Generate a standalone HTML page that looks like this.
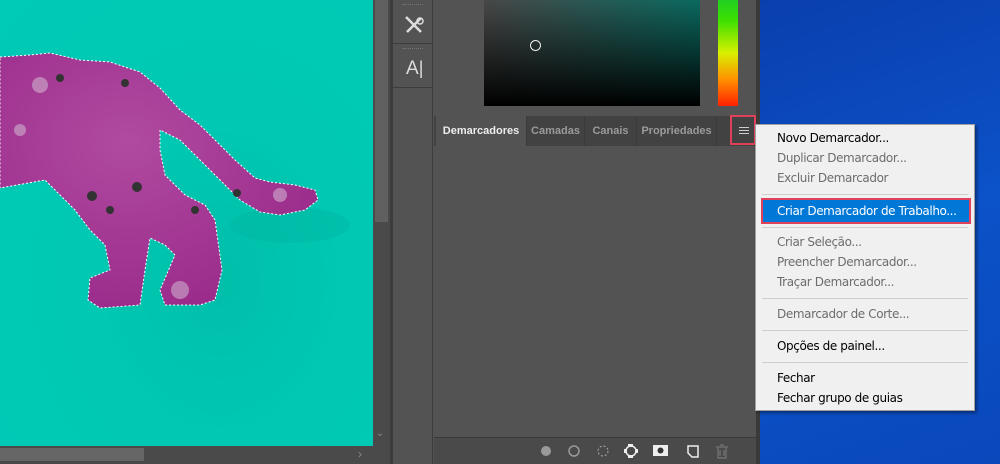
<!DOCTYPE html>
<html><head><meta charset="utf-8"><style>
*{margin:0;padding:0;box-sizing:border-box}
body{width:1000px;height:464px;overflow:hidden;position:relative;background:#535353;font-family:"Liberation Sans",sans-serif}
.a{position:absolute}
.menu div.i{position:absolute;left:21px;font-size:12px;font-family:"DejaVu Sans","Liberation Sans",sans-serif;letter-spacing:-0.4px}
.g{color:#6d6d6d}.k{color:#000}
.sep{position:absolute;left:6px;right:6px;height:1px;background:#cfcfcf}
.tab{position:absolute;top:0;height:30px;line-height:30px;font-size:11px;font-weight:bold;color:#9a9a9a;text-align:center;border-right:1px solid #3a3a3a;font-family:"Liberation Sans",sans-serif}
</style></head><body>
<div class="a" style="left:0;top:0;width:373px;height:446px;background:radial-gradient(ellipse at 220px 280px,#00bfaa 0,#00c8b2 40%,#00cbb6 100%)"></div>
<svg class="a" style="left:0;top:0" width="373" height="446">
<defs><radialGradient id="p" cx="0.4" cy="0.35" r="0.7"><stop offset="0" stop-color="#b04aa0"/><stop offset="1" stop-color="#9a2a8a"/></radialGradient></defs>
<ellipse cx="290" cy="225" rx="60" ry="18" fill="#00b5a0" opacity=".4"/>
<path d="M0,57 L30,55 L50,53 L80,60 L110,62 L140,72 L160,88 L180,110 L200,125 L215,140 L235,160 L255,178 L270,182 L295,185 L315,190 L318,200 L305,210 L280,215 L260,212 L240,200 L220,180 L200,160 L180,140 L160,130 L160,150 L165,175 L185,195 L205,205 L215,220 L222,270 L215,300 L200,305 L165,305 L160,290 L175,255 L165,245 L150,238 L145,270 L140,305 L100,308 L88,300 L90,278 L110,270 L105,245 L90,230 L75,210 L60,195 L45,180 L0,188 Z" fill="url(#p)" stroke="#fff" stroke-width="1" stroke-dasharray="2 2"/>
<g fill="#333"><circle cx="60" cy="78" r="4"/><circle cx="125" cy="83" r="4"/><circle cx="137" cy="187" r="5"/><circle cx="92" cy="196" r="5"/><circle cx="110" cy="210" r="4"/><circle cx="195" cy="210" r="4"/><circle cx="237" cy="193" r="4"/></g>
<g fill="#d8c8d8" opacity=".5"><circle cx="40" cy="85" r="8"/><circle cx="180" cy="290" r="9"/><circle cx="280" cy="195" r="7"/><circle cx="20" cy="130" r="6"/></g>
</svg>
<div class="a" style="left:373px;top:0;width:17px;height:446px;background:#4a4a4a"></div>
<div class="a" style="left:375px;top:0;width:13px;height:222px;background:#606060"></div>
<div class="a" style="left:376px;top:428px;color:#888;font-size:10px">&#8964;</div>
<div class="a" style="left:0;top:446px;width:390px;height:18px;background:#4a4a4a"></div>
<div class="a" style="left:0;top:448px;width:144px;height:13px;background:#666"></div>
<div class="a" style="left:358px;top:447px;color:#888;font-size:12px">&#8250;</div>
<div class="a" style="left:390px;top:0;width:3px;height:464px;background:#3c3c3c"></div>
<div class="a" style="left:393px;top:0;width:40px;height:464px;background:#535353;border-right:1px solid #3c3c3c"></div>
<div class="a" style="left:393px;top:43px;width:40px;height:1px;background:#3c3c3c"></div>
<div class="a" style="left:393px;top:87px;width:40px;height:1px;background:#3c3c3c"></div>
<div class="a" style="left:403px;top:4px;width:20px;height:3px;border-top:1px dotted #777"></div>
<div class="a" style="left:403px;top:48px;width:20px;height:3px;border-top:1px dotted #777"></div>
<svg class="a" style="left:403px;top:14px" width="22" height="22"><path d="M3,3 L18,18 M18,4 L4,18" stroke="#ddd" stroke-width="2.5"/><circle cx="17" cy="7" r="3" fill="none" stroke="#ddd" stroke-width="1.5"/></svg>
<div class="a" style="left:406px;top:58px;color:#ddd;font-size:19px">A<span style="font-size:18px">|</span></div>
<div class="a" style="left:434px;top:0;width:322px;height:116px;background:#535353"></div>
<div class="a" style="left:484px;top:0;width:216px;height:106px;background:linear-gradient(to bottom,transparent,#000),linear-gradient(to right,#484848,#0a6a60)"></div>
<div class="a" style="left:530px;top:40px;width:11px;height:11px;border:1px solid #eee;border-radius:50%"></div>
<div class="a" style="left:718px;top:0;width:20px;height:106px;background:linear-gradient(#20d020,#40e000 20%,#d8f000 50%,#ff9000 75%,#ff2000)"></div>
<div class="a" style="left:434px;top:116px;width:322px;height:30px;background:#424242">
<div class="tab" style="left:2px;width:91px;background:#535353;color:#eee">Demarcadores</div>
<div class="tab" style="left:93px;width:58px">Camadas</div>
<div class="tab" style="left:151px;width:52px">Canais</div>
<div class="tab" style="left:203px;width:80px">Propriedades</div>
</div>
<div class="a" style="left:730px;top:115px;width:26px;height:30px;border:2px solid #e0405a"></div>
<div class="a" style="left:739px;top:127px;width:10px;height:7px;border-top:1px solid #ccc;border-bottom:1px solid #ccc"><div style="margin-top:2px;height:1px;background:#ccc"></div></div>
<div class="a" style="left:434px;top:146px;width:322px;height:291px;background:#535353"></div>
<div class="a" style="left:434px;top:437px;width:322px;height:27px;background:#4a4a4a;border-top:1px solid #3a3a3a"></div>
<svg class="a" style="left:536px;top:442px" width="200" height="18">
<circle cx="10" cy="9" r="5" fill="#999"/>
<circle cx="38" cy="9" r="5" fill="none" stroke="#999" stroke-width="1.5"/>
<circle cx="67" cy="9" r="5" fill="none" stroke="#aaa" stroke-dasharray="2 2"/>
<circle cx="95" cy="9" r="5" fill="none" stroke="#eee" stroke-width="1.5"/>
<g fill="#eee"><rect x="92" y="2" width="5" height="3"/><rect x="92" y="13" width="5" height="3"/><rect x="88" y="7" width="3" height="4"/><rect x="99" y="7" width="3" height="4"/></g>
<rect x="117" y="3" width="15" height="11" fill="#eee"/><circle cx="124.5" cy="8.5" r="3" fill="#333"/>
<path d="M152,4 H162 V15 H156 L152,11 Z" fill="none" stroke="#eee" stroke-width="1.5"/>
<path d="M180,5 H192 M182,6 V16 H190 V6 M184,8 V14 M188,8 V14 M184,3 H188" fill="none" stroke="#777" stroke-width="1.2"/>
</svg>
<div class="a" style="left:756px;top:0;width:4px;height:464px;background:#3a3a3a"></div>
<div class="a" style="left:760px;top:0;width:240px;height:464px;background:linear-gradient(160deg,#0a3fae,#0c52c8 50%,#0a48bc)"></div>
<div class="a menu" style="left:755px;top:124px;width:220px;height:287px;background:#f0f0f0;border:1px solid #a0a0a0;box-shadow:2px 2px 3px rgba(0,0,0,.4)">
<div class="i k" style="top:6px">Novo Demarcador...</div>
<div class="i g" style="top:26px">Duplicar Demarcador...</div>
<div class="i g" style="top:46px">Excluir Demarcador</div>
<div class="sep" style="top:69px"></div>
<div class="a" style="left:5px;top:73px;width:210px;height:26px;background:#0078d7;border:2px solid #e0405a"></div>
<div class="i" style="top:79px;color:#fff">Criar Demarcador de Trabalho...</div>
<div class="sep" style="top:102px"></div>
<div class="i g" style="top:110px">Criar Seleção...</div>
<div class="i g" style="top:130px">Preencher Demarcador...</div>
<div class="i g" style="top:150px">Traçar Demarcador...</div>
<div class="sep" style="top:173px"></div>
<div class="i g" style="top:182px">Demarcador de Corte...</div>
<div class="sep" style="top:205px"></div>
<div class="i k" style="top:214px">Opções de painel...</div>
<div class="sep" style="top:237px"></div>
<div class="i k" style="top:246px">Fechar</div>
<div class="i k" style="top:266px">Fechar grupo de guias</div>
</div>
</body></html>
